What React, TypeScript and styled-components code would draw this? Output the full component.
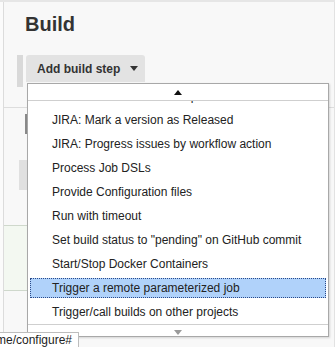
import React from "react";
import styled, { createGlobalStyle } from "styled-components";

const items = [
  "JIRA: Issue custom field updater",
  "JIRA: Mark a version as Released",
  "JIRA: Progress issues by workflow action",
  "Process Job DSLs",
  "Provide Configuration files",
  "Run with timeout",
  'Set build status to "pending" on GitHub commit',
  "Start/Stop Docker Containers",
  "Trigger a remote parameterized job",
  "Trigger/call builds on other projects",
];

const selected = 8;

const Triangle = ({ down, color }: { down?: boolean; color: string }) => (
  <svg width="8" height="5" viewBox="0 0 8 5">
    <path d={down ? "M0 0h8L4 5z" : "M0 5h8L4 0z"} fill={color} />
  </svg>
);

export default function App() {
  return (
    <>
      <GlobalStyle />
      <Page>
        <Panel>
          <Heading>Build</Heading>
          <ButtonRow>
            <Handle />
            <AddButton>
              Add build step
              <Triangle down color="#333" />
            </AddButton>
          </ButtonRow>
          <Divider />
          <Grip />
          <SideBar />
          <GreenBox />
        </Panel>

        <Menu>
          <Scroller>
            <Triangle color="#111" />
          </Scroller>
          <List>
            {items.map((label, i) => (
              <Item key={label} $active={i === selected} $first={i === 0}>
                {label}
              </Item>
            ))}
          </List>
          <Scroller $bottom>
            <Triangle down color="#9a9a9a" />
          </Scroller>
        </Menu>

        <StatusBar>me/configure#</StatusBar>
      </Page>
    </>
  );
}

const GlobalStyle = createGlobalStyle`
  html, body {
    margin: 0;
    width: 335px;
    height: 347px;
    overflow: hidden;
    background: #fbfbfb;
    font-family: "Liberation Sans", Arial, sans-serif;
  }
`;

const Page = styled.div`
  position: relative;
  width: 335px;
  height: 347px;
  overflow: hidden;
  border-top: 2px solid #e6e6e6;
  box-sizing: border-box;
`;

const Panel = styled.div`
  margin-left: 3px;
  height: 100%;
  border-left: 1px solid #dcdcdc;
  border-right: 1px solid #e2e2e2;
  background: #f8f8f8;
  display: flex;
  flex-direction: column;
`;

const Heading = styled.h2`
  margin: 10px 0 0 21px;
  font-size: 20px;
  font-weight: bold;
  color: #333;
  line-height: 24px;
`;

const ButtonRow = styled.div`
  display: flex;
  align-items: flex-start;
  gap: 3px;
  margin: 19px 0 0 13px;
`;

const Handle = styled.div`
  width: 6px;
  height: 32px;
  background: #d9d9d9;
`;

const AddButton = styled.div`
  width: 119px;
  height: 27px;
  box-sizing: border-box;
  padding-left: 11px;
  display: flex;
  align-items: center;
  gap: 10px;
  background: #e3e3e3;
  border-radius: 3px 3px 0 0;
  font-size: 12px;
  font-weight: bold;
  color: #333;
`;

const Divider = styled.div`
  margin-top: 20px;
  height: 1px;
  background: #dddddd;
`;

const Grip = styled.div`
  margin: 6px 0 0 21px;
  width: 3px;
  height: 20px;
  background: #8a8a8a;
`;

const SideBar = styled.div`
  margin: 26px 0 0 15px;
  width: 8px;
  height: 30px;
  background: #e0e0e0;
`;

const GreenBox = styled.div`
  margin-top: 35px;
  width: 30px;
  height: 64px;
  background: #f3f8f1;
  border: 1px solid #cfd8cc;
  border-left: none;
`;

const Menu = styled.div`
  position: absolute;
  left: 27px;
  top: 81px;
  width: 302px;
  height: 254px;
  box-sizing: border-box;
  background: #fff;
  border: 1px solid #a8a8a8;
  box-shadow: 1px 1px 2px rgba(0, 0, 0, 0.15);
  display: flex;
  flex-direction: column;
`;

const Scroller = styled.div<{ $bottom?: boolean }>`
  height: ${(p) => (p.$bottom ? "11px" : "16px")};
  flex: none;
  display: flex;
  align-items: center;
  justify-content: center;
  border-bottom: ${(p) => (p.$bottom ? "none" : "1px solid #cfcfcf")};
  border-top: ${(p) => (p.$bottom ? "1px solid #cfcfcf" : "none")};
  svg {
    margin-top: ${(p) => (p.$bottom ? "4px" : "0")};
  }
`;

const List = styled.div`
  flex: 1;
  overflow: hidden;
  padding: 0 2px;
`;

const Item = styled.div<{ $active?: boolean; $first?: boolean }>`
  height: 20px;
  margin: ${(p) => (p.$first ? "-15px" : "4px")} 0 0;
  box-sizing: border-box;
  padding-left: 22px;
  display: flex;
  align-items: center;
  font-size: 12px;
  color: #222;
  white-space: nowrap;
  background: ${(p) => (p.$active ? "#b0d2fa" : "transparent")};
  outline: ${(p) => (p.$active ? "1px dotted #2a4a8a" : "none")};
  outline-offset: -1px;
`;

const StatusBar = styled.div`
  position: absolute;
  left: 0;
  bottom: 0;
  height: 14px;
  padding: 0 6px 0 0;
  margin-left: -4px;
  background: #fff;
  border-top: 1px solid #bdbdbd;
  border-right: 1px solid #bdbdbd;
  font-size: 12px;
  line-height: 15px;
  color: #222;
`;
